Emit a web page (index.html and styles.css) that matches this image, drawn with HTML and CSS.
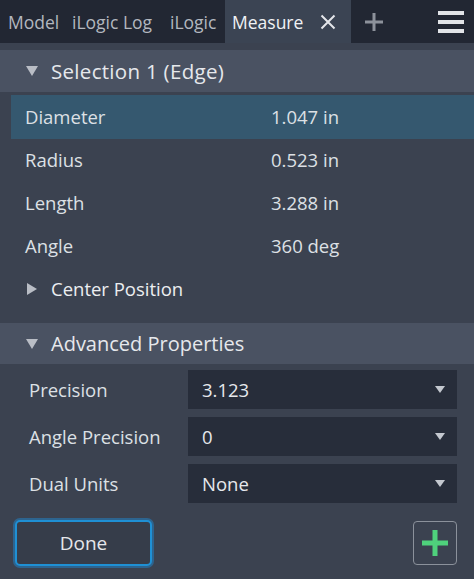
FILE: index.html
```html
<!DOCTYPE html>
<html>
<head>
<meta charset="utf-8">
<link rel="stylesheet" href="styles.css">
</head>
<body>
<div class="panel">
  <div class="tabbar">
    <div class="tab t-model">Model</div>
    <div class="tab t-log">iLogic Log</div>
    <div class="tab t-ilogic">iLogic</div>
    <div class="tab active">Measure
      <svg class="close" width="16" height="16" viewBox="0 0 16 16"><path d="M1.5 1.5 L14.5 14.5 M14.5 1.5 L1.5 14.5" stroke="#e4e6ea" stroke-width="2" fill="none"/></svg>
    </div>
    <div class="addtab"><svg width="20" height="20" viewBox="0 0 20 20"><path d="M10 1 V19 M1 10 H19" stroke="#8d929b" stroke-width="3" fill="none"/></svg></div>
    <div class="spacer"></div>
    <div class="menu"><span></span><span></span><span></span></div>
  </div>

  <div class="section-head sel"><span class="tri-down"></span>Selection 1 (Edge)</div>

  <div class="rows">
    <div class="row selected"><span class="lbl">Diameter</span><span class="val">1.047 in</span></div>
    <div class="row"><span class="lbl">Radius</span><span class="val">0.523 in</span></div>
    <div class="row"><span class="lbl">Length</span><span class="val">3.288 in</span></div>
    <div class="row"><span class="lbl">Angle</span><span class="val">360 deg</span></div>
    <div class="row sub"><span class="tri-right"></span>Center Position</div>
  </div>

  <div class="section-head adv"><span class="tri-down"></span>Advanced Properties</div>

  <div class="props">
    <div class="prop"><span class="plbl">Precision</span><div class="select"><span>3.123</span><span class="arrow"></span></div></div>
    <div class="prop"><span class="plbl">Angle Precision</span><div class="select"><span>0</span><span class="arrow"></span></div></div>
    <div class="prop"><span class="plbl">Dual Units</span><div class="select"><span>None</span><span class="arrow"></span></div></div>
  </div>

  <div class="footer">
    <button class="done">Done</button>
    <button class="add"><svg width="28" height="28" viewBox="0 0 28 28"><path d="M14 1 V27 M1 14 H27" stroke="#4fd17c" stroke-width="5" fill="none"/></svg></button>
  </div>
</div>
</body>
</html>
```

FILE: styles.css
```css
html, body {
  margin: 0;
  padding: 0;
  background: #3b4250;
}
body {
  width: 474px;
  height: 579px;
  overflow: hidden;
  font-family: "Open Sans", "Noto Sans", sans-serif;
  color: #e2e5e9;
}
.panel {
  display: flex;
  flex-direction: column;
  height: 579px;
}
.tabbar {
  height: 43px;
  background: #222733;
  display: flex;
  align-items: stretch;
  flex-shrink: 0;
}
.tab {
  display: flex;
  align-items: center;
  font-size: 17.5px;
  color: #b3b7bf;
  padding: 0 0 0 8px;
  box-sizing: border-box;
  white-space: nowrap;
  flex-shrink: 0;
}
.t-model { width: 64px; }
.t-log { width: 98px; }
.t-ilogic { width: 63px; }
.tab.active {
  background: #3b4453;
  color: #f0f2f5;
  padding: 0 15px 0 7px;
  gap: 17px;
}
.addtab {
  display: flex;
  align-items: center;
  padding-left: 13px;
}
.spacer { flex: 1; }
.menu {
  display: flex;
  flex-direction: column;
  justify-content: center;
  gap: 5px;
  padding-right: 10px;
}
.menu span {
  display: block;
  width: 26px;
  height: 4px;
  background: #e2e4e8;
}
.section-head {
  margin-top: 7px;
  height: 42px;
  background: #4a5262;
  display: flex;
  align-items: center;
  padding-left: 26px;
  font-size: 20px;
  color: #e6e8ec;
}
.section-head.sel { font-size: 20.5px; letter-spacing: 0.3px; }
.tri-down {
  width: 0;
  height: 0;
  border-left: 6px solid transparent;
  border-right: 6px solid transparent;
  border-top: 10px solid #b9bdc5;
  margin-right: 13px;
}
.tri-right {
  width: 0;
  height: 0;
  border-top: 6px solid transparent;
  border-bottom: 6px solid transparent;
  border-left: 10px solid #b9bdc5;
  margin-right: 14px;
  margin-left: 2px;
}
.rows {
  margin-top: 3px;
  display: flex;
  flex-direction: column;
}
.row {
  height: 43px;
  margin-left: 11px;
  padding-left: 14px;
  padding-bottom: 2px;
  box-sizing: border-box;
  display: flex;
  align-items: center;
  font-size: 18.5px;
  color: #dde0e5;
}
.row.selected {
  height: 44px;
  background: #35586f;
}
.lbl { width: 246px; }
.row.sub { color: #eceef1; }
.adv { margin-top: 12px; height: 41px; }
.props {
  display: flex;
  flex-direction: column;
  gap: 8px;
  margin-top: 6px;
}
.prop {
  display: flex;
  align-items: center;
  padding-left: 29px;
  font-size: 18.5px;
  color: #dde0e5;
}
.plbl { width: 159px; }
.select {
  width: 269px;
  height: 39px;
  background: #272d3a;
  display: flex;
  align-items: center;
  justify-content: space-between;
  padding: 0 12px 0 14px;
  box-sizing: border-box;
  color: #e6e8ec;
}
.arrow {
  width: 0;
  height: 0;
  border-left: 5px solid transparent;
  border-right: 5px solid transparent;
  border-top: 7px solid #c4c8cf;
}
.footer {
  display: flex;
  justify-content: space-between;
  align-items: center;
  padding: 0 17px 0 15px;
  margin-top: 17px;
}
.done {
  width: 137px;
  height: 46px;
  background: #363d4a;
  border: 2px solid #1f90d4;
  border-radius: 5px;
  box-shadow: 0 0 0 2px rgba(34, 130, 195, 0.55);
  color: #e6e8ec;
  font-family: inherit;
  font-size: 19px;
  padding: 0;
}
.add {
  width: 44px;
  height: 44px;
  background: #3b4250;
  border: 1.5px solid #8b919b;
  border-radius: 4px;
  padding: 0;
  display: flex;
  align-items: center;
  justify-content: center;
}
```
